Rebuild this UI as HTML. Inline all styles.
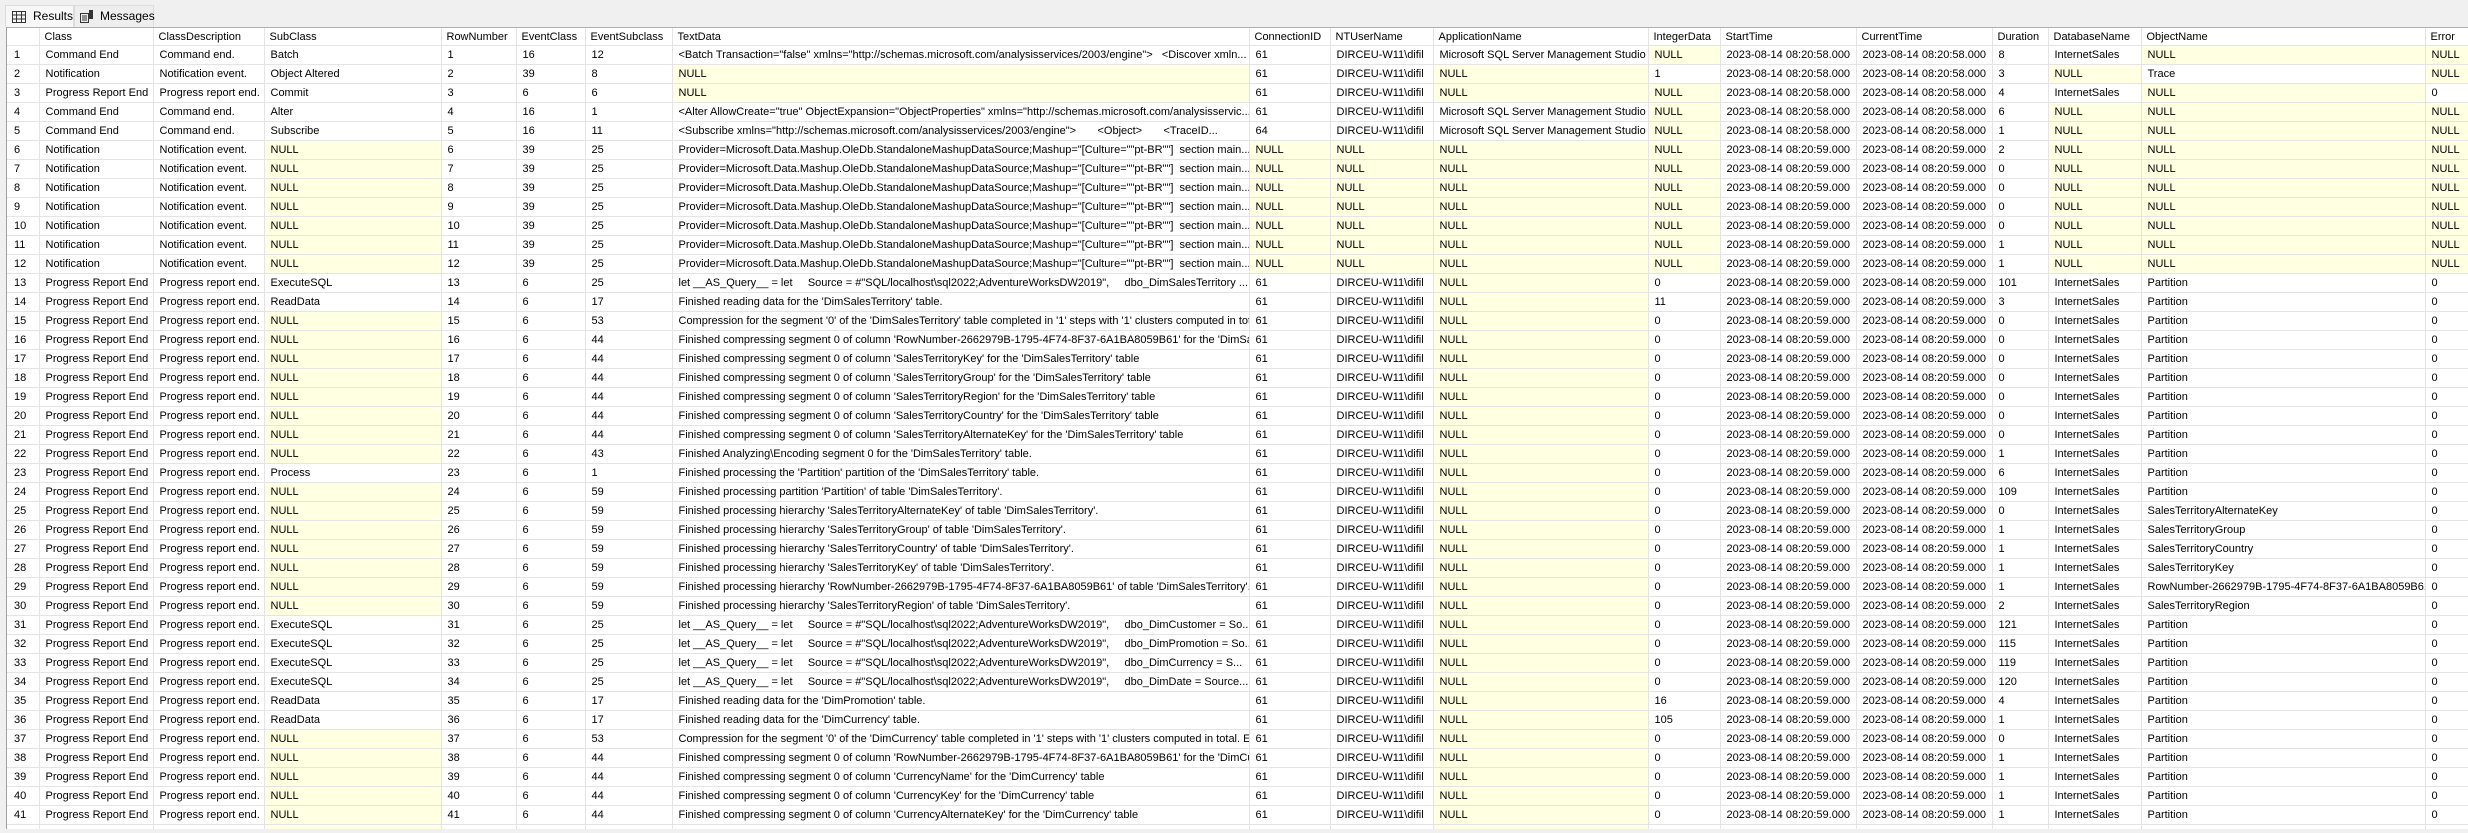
<!DOCTYPE html>
<html><head><meta charset="utf-8">
<style>
html,body{margin:0;padding:0;width:2468px;height:833px;overflow:hidden;background:#f0f0f0;font-family:"Liberation Sans",sans-serif;}
.tabs{position:absolute;left:0;top:0;height:27px;width:2468px;}
.tab{position:absolute;top:5px;height:21px;font-size:12px;line-height:21px;color:#000;}
.t1{left:5px;width:67px;background:#f7f7f7;border:1px solid #dcdcdc;border-bottom:none;}
.t2{left:74px;width:78px;background:#eeeeee;border:1px solid #dcdcdc;border-bottom:none;}
.grid{position:absolute;left:6px;top:27px;width:2462px;height:801px;overflow:hidden;background:#fff;border-left:1px solid #a0a0a0;border-top:1px solid #b0b0b0;}
table{border-collapse:collapse;table-layout:fixed;width:2461px;font-size:11px;}
td,th{border-right:1px solid #e4e4e4;border-bottom:1px solid #e4e4e4;padding:0 0 0 6px;height:18px;white-space:nowrap;overflow:hidden;text-overflow:clip;text-align:left;font-weight:normal;color:#000;}
th{height:17px;padding-left:5px;}
td.n{background:#ffffe1;}
td:first-child{padding-left:7px;}
</style></head><body>
<div class="tabs">
<div class="tab t1"><svg width="14" height="12" style="position:absolute;left:6px;top:5px" viewBox="0 0 14 12"><rect x="0.5" y="0.5" width="13" height="11" fill="none" stroke="#333"/><path d="M0 4h14M0 8h14M4.5 0v12M9.5 0v12" stroke="#333" stroke-width="1"/></svg><span style="position:absolute;left:27px">Results</span></div>
<div class="tab t2"><svg width="14" height="13" style="position:absolute;left:5px;top:4px" viewBox="0 0 14 13"><rect x="0.5" y="3.5" width="8" height="9" fill="none" stroke="#333"/><path d="M2 6h5M2 8h5M2 10h5" stroke="#333"/><rect x="9" y="0" width="4" height="9" fill="#333"/></svg><span style="position:absolute;left:25px">Messages</span></div>
</div>
<div class="grid">
<table>
<colgroup><col style="width:32px"><col style="width:114px"><col style="width:111px"><col style="width:177px"><col style="width:75px"><col style="width:69px"><col style="width:87px"><col style="width:577px"><col style="width:81px"><col style="width:103px"><col style="width:215px"><col style="width:72px"><col style="width:136px"><col style="width:136px"><col style="width:56px"><col style="width:93px"><col style="width:284px"><col style="width:43px"></colgroup>
<tr><th></th><th>Class</th><th>ClassDescription</th><th>SubClass</th><th>RowNumber</th><th>EventClass</th><th>EventSubclass</th><th>TextData</th><th>ConnectionID</th><th>NTUserName</th><th>ApplicationName</th><th>IntegerData</th><th>StartTime</th><th>CurrentTime</th><th>Duration</th><th>DatabaseName</th><th>ObjectName</th><th>Error</th></tr>
<tr><td>1</td><td>Command End</td><td>Command end.</td><td>Batch</td><td>1</td><td>16</td><td>12</td><td>&lt;Batch Transaction="false" xmlns="http://schemas.microsoft.com/analysisservices/2003/engine"&gt; &nbsp; &lt;Discover xmln...</td><td>61</td><td>DIRCEU-W11\difil</td><td>Microsoft SQL Server Management Studio</td><td class="n">NULL</td><td>2023-08-14 08:20:58.000</td><td>2023-08-14 08:20:58.000</td><td>8</td><td>InternetSales</td><td class="n">NULL</td><td class="n">NULL</td></tr>
<tr><td>2</td><td>Notification</td><td>Notification event.</td><td>Object Altered</td><td>2</td><td>39</td><td>8</td><td class="n">NULL</td><td>61</td><td>DIRCEU-W11\difil</td><td class="n">NULL</td><td>1</td><td>2023-08-14 08:20:58.000</td><td>2023-08-14 08:20:58.000</td><td>3</td><td class="n">NULL</td><td>Trace</td><td class="n">NULL</td></tr>
<tr><td>3</td><td>Progress Report End</td><td>Progress report end.</td><td>Commit</td><td>3</td><td>6</td><td>6</td><td class="n">NULL</td><td>61</td><td>DIRCEU-W11\difil</td><td class="n">NULL</td><td class="n">NULL</td><td>2023-08-14 08:20:58.000</td><td>2023-08-14 08:20:58.000</td><td>4</td><td>InternetSales</td><td class="n">NULL</td><td>0</td></tr>
<tr><td>4</td><td>Command End</td><td>Command end.</td><td>Alter</td><td>4</td><td>16</td><td>1</td><td>&lt;Alter AllowCreate="true" ObjectExpansion="ObjectProperties" xmlns="http://schemas.microsoft.com/analysisservic...</td><td>61</td><td>DIRCEU-W11\difil</td><td>Microsoft SQL Server Management Studio</td><td class="n">NULL</td><td>2023-08-14 08:20:58.000</td><td>2023-08-14 08:20:58.000</td><td>6</td><td class="n">NULL</td><td class="n">NULL</td><td class="n">NULL</td></tr>
<tr><td>5</td><td>Command End</td><td>Command end.</td><td>Subscribe</td><td>5</td><td>16</td><td>11</td><td>&lt;Subscribe xmlns="http://schemas.microsoft.com/analysisservices/2003/engine"&gt; &nbsp; &nbsp; &nbsp; &lt;Object&gt; &nbsp; &nbsp; &nbsp; &lt;TraceID...</td><td>64</td><td>DIRCEU-W11\difil</td><td>Microsoft SQL Server Management Studio</td><td class="n">NULL</td><td>2023-08-14 08:20:58.000</td><td>2023-08-14 08:20:58.000</td><td>1</td><td class="n">NULL</td><td class="n">NULL</td><td class="n">NULL</td></tr>
<tr><td>6</td><td>Notification</td><td>Notification event.</td><td class="n">NULL</td><td>6</td><td>39</td><td>25</td><td>Provider=Microsoft.Data.Mashup.OleDb.StandaloneMashupDataSource;Mashup="[Culture=""pt-BR""] &nbsp;section main...</td><td class="n">NULL</td><td class="n">NULL</td><td class="n">NULL</td><td class="n">NULL</td><td>2023-08-14 08:20:59.000</td><td>2023-08-14 08:20:59.000</td><td>2</td><td class="n">NULL</td><td class="n">NULL</td><td class="n">NULL</td></tr>
<tr><td>7</td><td>Notification</td><td>Notification event.</td><td class="n">NULL</td><td>7</td><td>39</td><td>25</td><td>Provider=Microsoft.Data.Mashup.OleDb.StandaloneMashupDataSource;Mashup="[Culture=""pt-BR""] &nbsp;section main...</td><td class="n">NULL</td><td class="n">NULL</td><td class="n">NULL</td><td class="n">NULL</td><td>2023-08-14 08:20:59.000</td><td>2023-08-14 08:20:59.000</td><td>0</td><td class="n">NULL</td><td class="n">NULL</td><td class="n">NULL</td></tr>
<tr><td>8</td><td>Notification</td><td>Notification event.</td><td class="n">NULL</td><td>8</td><td>39</td><td>25</td><td>Provider=Microsoft.Data.Mashup.OleDb.StandaloneMashupDataSource;Mashup="[Culture=""pt-BR""] &nbsp;section main...</td><td class="n">NULL</td><td class="n">NULL</td><td class="n">NULL</td><td class="n">NULL</td><td>2023-08-14 08:20:59.000</td><td>2023-08-14 08:20:59.000</td><td>0</td><td class="n">NULL</td><td class="n">NULL</td><td class="n">NULL</td></tr>
<tr><td>9</td><td>Notification</td><td>Notification event.</td><td class="n">NULL</td><td>9</td><td>39</td><td>25</td><td>Provider=Microsoft.Data.Mashup.OleDb.StandaloneMashupDataSource;Mashup="[Culture=""pt-BR""] &nbsp;section main...</td><td class="n">NULL</td><td class="n">NULL</td><td class="n">NULL</td><td class="n">NULL</td><td>2023-08-14 08:20:59.000</td><td>2023-08-14 08:20:59.000</td><td>0</td><td class="n">NULL</td><td class="n">NULL</td><td class="n">NULL</td></tr>
<tr><td>10</td><td>Notification</td><td>Notification event.</td><td class="n">NULL</td><td>10</td><td>39</td><td>25</td><td>Provider=Microsoft.Data.Mashup.OleDb.StandaloneMashupDataSource;Mashup="[Culture=""pt-BR""] &nbsp;section main...</td><td class="n">NULL</td><td class="n">NULL</td><td class="n">NULL</td><td class="n">NULL</td><td>2023-08-14 08:20:59.000</td><td>2023-08-14 08:20:59.000</td><td>0</td><td class="n">NULL</td><td class="n">NULL</td><td class="n">NULL</td></tr>
<tr><td>11</td><td>Notification</td><td>Notification event.</td><td class="n">NULL</td><td>11</td><td>39</td><td>25</td><td>Provider=Microsoft.Data.Mashup.OleDb.StandaloneMashupDataSource;Mashup="[Culture=""pt-BR""] &nbsp;section main...</td><td class="n">NULL</td><td class="n">NULL</td><td class="n">NULL</td><td class="n">NULL</td><td>2023-08-14 08:20:59.000</td><td>2023-08-14 08:20:59.000</td><td>1</td><td class="n">NULL</td><td class="n">NULL</td><td class="n">NULL</td></tr>
<tr><td>12</td><td>Notification</td><td>Notification event.</td><td class="n">NULL</td><td>12</td><td>39</td><td>25</td><td>Provider=Microsoft.Data.Mashup.OleDb.StandaloneMashupDataSource;Mashup="[Culture=""pt-BR""] &nbsp;section main...</td><td class="n">NULL</td><td class="n">NULL</td><td class="n">NULL</td><td class="n">NULL</td><td>2023-08-14 08:20:59.000</td><td>2023-08-14 08:20:59.000</td><td>1</td><td class="n">NULL</td><td class="n">NULL</td><td class="n">NULL</td></tr>
<tr><td>13</td><td>Progress Report End</td><td>Progress report end.</td><td>ExecuteSQL</td><td>13</td><td>6</td><td>25</td><td>let __AS_Query__ = let &nbsp; &nbsp; Source = #"SQL/localhost\sql2022;AdventureWorksDW2019", &nbsp; &nbsp; dbo_DimSalesTerritory ...</td><td>61</td><td>DIRCEU-W11\difil</td><td class="n">NULL</td><td>0</td><td>2023-08-14 08:20:59.000</td><td>2023-08-14 08:20:59.000</td><td>101</td><td>InternetSales</td><td>Partition</td><td>0</td></tr>
<tr><td>14</td><td>Progress Report End</td><td>Progress report end.</td><td>ReadData</td><td>14</td><td>6</td><td>17</td><td>Finished reading data for the 'DimSalesTerritory' table.</td><td>61</td><td>DIRCEU-W11\difil</td><td class="n">NULL</td><td>11</td><td>2023-08-14 08:20:59.000</td><td>2023-08-14 08:20:59.000</td><td>3</td><td>InternetSales</td><td>Partition</td><td>0</td></tr>
<tr><td>15</td><td>Progress Report End</td><td>Progress report end.</td><td class="n">NULL</td><td>15</td><td>6</td><td>53</td><td>Compression for the segment '0' of the 'DimSalesTerritory' table completed in '1' steps with '1' clusters computed in tot...</td><td>61</td><td>DIRCEU-W11\difil</td><td class="n">NULL</td><td>0</td><td>2023-08-14 08:20:59.000</td><td>2023-08-14 08:20:59.000</td><td>0</td><td>InternetSales</td><td>Partition</td><td>0</td></tr>
<tr><td>16</td><td>Progress Report End</td><td>Progress report end.</td><td class="n">NULL</td><td>16</td><td>6</td><td>44</td><td>Finished compressing segment 0 of column 'RowNumber-2662979B-1795-4F74-8F37-6A1BA8059B61' for the 'DimSal...</td><td>61</td><td>DIRCEU-W11\difil</td><td class="n">NULL</td><td>0</td><td>2023-08-14 08:20:59.000</td><td>2023-08-14 08:20:59.000</td><td>0</td><td>InternetSales</td><td>Partition</td><td>0</td></tr>
<tr><td>17</td><td>Progress Report End</td><td>Progress report end.</td><td class="n">NULL</td><td>17</td><td>6</td><td>44</td><td>Finished compressing segment 0 of column 'SalesTerritoryKey' for the 'DimSalesTerritory' table</td><td>61</td><td>DIRCEU-W11\difil</td><td class="n">NULL</td><td>0</td><td>2023-08-14 08:20:59.000</td><td>2023-08-14 08:20:59.000</td><td>0</td><td>InternetSales</td><td>Partition</td><td>0</td></tr>
<tr><td>18</td><td>Progress Report End</td><td>Progress report end.</td><td class="n">NULL</td><td>18</td><td>6</td><td>44</td><td>Finished compressing segment 0 of column 'SalesTerritoryGroup' for the 'DimSalesTerritory' table</td><td>61</td><td>DIRCEU-W11\difil</td><td class="n">NULL</td><td>0</td><td>2023-08-14 08:20:59.000</td><td>2023-08-14 08:20:59.000</td><td>0</td><td>InternetSales</td><td>Partition</td><td>0</td></tr>
<tr><td>19</td><td>Progress Report End</td><td>Progress report end.</td><td class="n">NULL</td><td>19</td><td>6</td><td>44</td><td>Finished compressing segment 0 of column 'SalesTerritoryRegion' for the 'DimSalesTerritory' table</td><td>61</td><td>DIRCEU-W11\difil</td><td class="n">NULL</td><td>0</td><td>2023-08-14 08:20:59.000</td><td>2023-08-14 08:20:59.000</td><td>0</td><td>InternetSales</td><td>Partition</td><td>0</td></tr>
<tr><td>20</td><td>Progress Report End</td><td>Progress report end.</td><td class="n">NULL</td><td>20</td><td>6</td><td>44</td><td>Finished compressing segment 0 of column 'SalesTerritoryCountry' for the 'DimSalesTerritory' table</td><td>61</td><td>DIRCEU-W11\difil</td><td class="n">NULL</td><td>0</td><td>2023-08-14 08:20:59.000</td><td>2023-08-14 08:20:59.000</td><td>0</td><td>InternetSales</td><td>Partition</td><td>0</td></tr>
<tr><td>21</td><td>Progress Report End</td><td>Progress report end.</td><td class="n">NULL</td><td>21</td><td>6</td><td>44</td><td>Finished compressing segment 0 of column 'SalesTerritoryAlternateKey' for the 'DimSalesTerritory' table</td><td>61</td><td>DIRCEU-W11\difil</td><td class="n">NULL</td><td>0</td><td>2023-08-14 08:20:59.000</td><td>2023-08-14 08:20:59.000</td><td>0</td><td>InternetSales</td><td>Partition</td><td>0</td></tr>
<tr><td>22</td><td>Progress Report End</td><td>Progress report end.</td><td class="n">NULL</td><td>22</td><td>6</td><td>43</td><td>Finished Analyzing\Encoding segment 0 for the 'DimSalesTerritory' table.</td><td>61</td><td>DIRCEU-W11\difil</td><td class="n">NULL</td><td>0</td><td>2023-08-14 08:20:59.000</td><td>2023-08-14 08:20:59.000</td><td>1</td><td>InternetSales</td><td>Partition</td><td>0</td></tr>
<tr><td>23</td><td>Progress Report End</td><td>Progress report end.</td><td>Process</td><td>23</td><td>6</td><td>1</td><td>Finished processing the 'Partition' partition of the 'DimSalesTerritory' table.</td><td>61</td><td>DIRCEU-W11\difil</td><td class="n">NULL</td><td>0</td><td>2023-08-14 08:20:59.000</td><td>2023-08-14 08:20:59.000</td><td>6</td><td>InternetSales</td><td>Partition</td><td>0</td></tr>
<tr><td>24</td><td>Progress Report End</td><td>Progress report end.</td><td class="n">NULL</td><td>24</td><td>6</td><td>59</td><td>Finished processing partition 'Partition' of table 'DimSalesTerritory'.</td><td>61</td><td>DIRCEU-W11\difil</td><td class="n">NULL</td><td>0</td><td>2023-08-14 08:20:59.000</td><td>2023-08-14 08:20:59.000</td><td>109</td><td>InternetSales</td><td>Partition</td><td>0</td></tr>
<tr><td>25</td><td>Progress Report End</td><td>Progress report end.</td><td class="n">NULL</td><td>25</td><td>6</td><td>59</td><td>Finished processing hierarchy 'SalesTerritoryAlternateKey' of table 'DimSalesTerritory'.</td><td>61</td><td>DIRCEU-W11\difil</td><td class="n">NULL</td><td>0</td><td>2023-08-14 08:20:59.000</td><td>2023-08-14 08:20:59.000</td><td>0</td><td>InternetSales</td><td>SalesTerritoryAlternateKey</td><td>0</td></tr>
<tr><td>26</td><td>Progress Report End</td><td>Progress report end.</td><td class="n">NULL</td><td>26</td><td>6</td><td>59</td><td>Finished processing hierarchy 'SalesTerritoryGroup' of table 'DimSalesTerritory'.</td><td>61</td><td>DIRCEU-W11\difil</td><td class="n">NULL</td><td>0</td><td>2023-08-14 08:20:59.000</td><td>2023-08-14 08:20:59.000</td><td>1</td><td>InternetSales</td><td>SalesTerritoryGroup</td><td>0</td></tr>
<tr><td>27</td><td>Progress Report End</td><td>Progress report end.</td><td class="n">NULL</td><td>27</td><td>6</td><td>59</td><td>Finished processing hierarchy 'SalesTerritoryCountry' of table 'DimSalesTerritory'.</td><td>61</td><td>DIRCEU-W11\difil</td><td class="n">NULL</td><td>0</td><td>2023-08-14 08:20:59.000</td><td>2023-08-14 08:20:59.000</td><td>1</td><td>InternetSales</td><td>SalesTerritoryCountry</td><td>0</td></tr>
<tr><td>28</td><td>Progress Report End</td><td>Progress report end.</td><td class="n">NULL</td><td>28</td><td>6</td><td>59</td><td>Finished processing hierarchy 'SalesTerritoryKey' of table 'DimSalesTerritory'.</td><td>61</td><td>DIRCEU-W11\difil</td><td class="n">NULL</td><td>0</td><td>2023-08-14 08:20:59.000</td><td>2023-08-14 08:20:59.000</td><td>1</td><td>InternetSales</td><td>SalesTerritoryKey</td><td>0</td></tr>
<tr><td>29</td><td>Progress Report End</td><td>Progress report end.</td><td class="n">NULL</td><td>29</td><td>6</td><td>59</td><td>Finished processing hierarchy 'RowNumber-2662979B-1795-4F74-8F37-6A1BA8059B61' of table 'DimSalesTerritory'.</td><td>61</td><td>DIRCEU-W11\difil</td><td class="n">NULL</td><td>0</td><td>2023-08-14 08:20:59.000</td><td>2023-08-14 08:20:59.000</td><td>1</td><td>InternetSales</td><td>RowNumber-2662979B-1795-4F74-8F37-6A1BA8059B61</td><td>0</td></tr>
<tr><td>30</td><td>Progress Report End</td><td>Progress report end.</td><td class="n">NULL</td><td>30</td><td>6</td><td>59</td><td>Finished processing hierarchy 'SalesTerritoryRegion' of table 'DimSalesTerritory'.</td><td>61</td><td>DIRCEU-W11\difil</td><td class="n">NULL</td><td>0</td><td>2023-08-14 08:20:59.000</td><td>2023-08-14 08:20:59.000</td><td>2</td><td>InternetSales</td><td>SalesTerritoryRegion</td><td>0</td></tr>
<tr><td>31</td><td>Progress Report End</td><td>Progress report end.</td><td>ExecuteSQL</td><td>31</td><td>6</td><td>25</td><td>let __AS_Query__ = let &nbsp; &nbsp; Source = #"SQL/localhost\sql2022;AdventureWorksDW2019", &nbsp; &nbsp; dbo_DimCustomer = So...</td><td>61</td><td>DIRCEU-W11\difil</td><td class="n">NULL</td><td>0</td><td>2023-08-14 08:20:59.000</td><td>2023-08-14 08:20:59.000</td><td>121</td><td>InternetSales</td><td>Partition</td><td>0</td></tr>
<tr><td>32</td><td>Progress Report End</td><td>Progress report end.</td><td>ExecuteSQL</td><td>32</td><td>6</td><td>25</td><td>let __AS_Query__ = let &nbsp; &nbsp; Source = #"SQL/localhost\sql2022;AdventureWorksDW2019", &nbsp; &nbsp; dbo_DimPromotion = So...</td><td>61</td><td>DIRCEU-W11\difil</td><td class="n">NULL</td><td>0</td><td>2023-08-14 08:20:59.000</td><td>2023-08-14 08:20:59.000</td><td>115</td><td>InternetSales</td><td>Partition</td><td>0</td></tr>
<tr><td>33</td><td>Progress Report End</td><td>Progress report end.</td><td>ExecuteSQL</td><td>33</td><td>6</td><td>25</td><td>let __AS_Query__ = let &nbsp; &nbsp; Source = #"SQL/localhost\sql2022;AdventureWorksDW2019", &nbsp; &nbsp; dbo_DimCurrency = S...</td><td>61</td><td>DIRCEU-W11\difil</td><td class="n">NULL</td><td>0</td><td>2023-08-14 08:20:59.000</td><td>2023-08-14 08:20:59.000</td><td>119</td><td>InternetSales</td><td>Partition</td><td>0</td></tr>
<tr><td>34</td><td>Progress Report End</td><td>Progress report end.</td><td>ExecuteSQL</td><td>34</td><td>6</td><td>25</td><td>let __AS_Query__ = let &nbsp; &nbsp; Source = #"SQL/localhost\sql2022;AdventureWorksDW2019", &nbsp; &nbsp; dbo_DimDate = Source...</td><td>61</td><td>DIRCEU-W11\difil</td><td class="n">NULL</td><td>0</td><td>2023-08-14 08:20:59.000</td><td>2023-08-14 08:20:59.000</td><td>120</td><td>InternetSales</td><td>Partition</td><td>0</td></tr>
<tr><td>35</td><td>Progress Report End</td><td>Progress report end.</td><td>ReadData</td><td>35</td><td>6</td><td>17</td><td>Finished reading data for the 'DimPromotion' table.</td><td>61</td><td>DIRCEU-W11\difil</td><td class="n">NULL</td><td>16</td><td>2023-08-14 08:20:59.000</td><td>2023-08-14 08:20:59.000</td><td>4</td><td>InternetSales</td><td>Partition</td><td>0</td></tr>
<tr><td>36</td><td>Progress Report End</td><td>Progress report end.</td><td>ReadData</td><td>36</td><td>6</td><td>17</td><td>Finished reading data for the 'DimCurrency' table.</td><td>61</td><td>DIRCEU-W11\difil</td><td class="n">NULL</td><td>105</td><td>2023-08-14 08:20:59.000</td><td>2023-08-14 08:20:59.000</td><td>1</td><td>InternetSales</td><td>Partition</td><td>0</td></tr>
<tr><td>37</td><td>Progress Report End</td><td>Progress report end.</td><td class="n">NULL</td><td>37</td><td>6</td><td>53</td><td>Compression for the segment '0' of the 'DimCurrency' table completed in '1' steps with '1' clusters computed in total. Ex...</td><td>61</td><td>DIRCEU-W11\difil</td><td class="n">NULL</td><td>0</td><td>2023-08-14 08:20:59.000</td><td>2023-08-14 08:20:59.000</td><td>0</td><td>InternetSales</td><td>Partition</td><td>0</td></tr>
<tr><td>38</td><td>Progress Report End</td><td>Progress report end.</td><td class="n">NULL</td><td>38</td><td>6</td><td>44</td><td>Finished compressing segment 0 of column 'RowNumber-2662979B-1795-4F74-8F37-6A1BA8059B61' for the 'DimCur...</td><td>61</td><td>DIRCEU-W11\difil</td><td class="n">NULL</td><td>0</td><td>2023-08-14 08:20:59.000</td><td>2023-08-14 08:20:59.000</td><td>1</td><td>InternetSales</td><td>Partition</td><td>0</td></tr>
<tr><td>39</td><td>Progress Report End</td><td>Progress report end.</td><td class="n">NULL</td><td>39</td><td>6</td><td>44</td><td>Finished compressing segment 0 of column 'CurrencyName' for the 'DimCurrency' table</td><td>61</td><td>DIRCEU-W11\difil</td><td class="n">NULL</td><td>0</td><td>2023-08-14 08:20:59.000</td><td>2023-08-14 08:20:59.000</td><td>1</td><td>InternetSales</td><td>Partition</td><td>0</td></tr>
<tr><td>40</td><td>Progress Report End</td><td>Progress report end.</td><td class="n">NULL</td><td>40</td><td>6</td><td>44</td><td>Finished compressing segment 0 of column 'CurrencyKey' for the 'DimCurrency' table</td><td>61</td><td>DIRCEU-W11\difil</td><td class="n">NULL</td><td>0</td><td>2023-08-14 08:20:59.000</td><td>2023-08-14 08:20:59.000</td><td>1</td><td>InternetSales</td><td>Partition</td><td>0</td></tr>
<tr><td>41</td><td>Progress Report End</td><td>Progress report end.</td><td class="n">NULL</td><td>41</td><td>6</td><td>44</td><td>Finished compressing segment 0 of column 'CurrencyAlternateKey' for the 'DimCurrency' table</td><td>61</td><td>DIRCEU-W11\difil</td><td class="n">NULL</td><td>0</td><td>2023-08-14 08:20:59.000</td><td>2023-08-14 08:20:59.000</td><td>1</td><td>InternetSales</td><td>Partition</td><td>0</td></tr>
<tr><td></td><td></td><td></td><td class="n"></td><td></td><td></td><td></td><td></td><td></td><td></td><td class="n"></td><td></td><td></td><td></td><td></td><td></td><td></td><td></td></tr>
</table>
</div>
</body></html>
